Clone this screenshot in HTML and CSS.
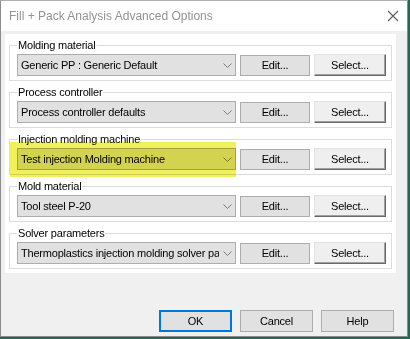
FILE: index.html
```html
<!DOCTYPE html>
<html>
<head>
<meta charset="utf-8">
<link rel="stylesheet" href="styles.css">
</head>
<body>
<div class="window">
  <div class="titlebar">
    <span class="title">Fill + Pack Analysis Advanced Options</span>
    <svg class="close" width="12" height="12" viewBox="0 0 12 12"><path d="M1 1 L11 11 M11 1 L1 11" stroke="#5a5a5a" stroke-width="1.1" fill="none"/></svg>
  </div>
  <div class="client">
    <div class="panel">
      <fieldset class="group">
        <legend>Molding material</legend>
        <div class="row">
          <div class="combo"><span class="combo-text">Generic PP : Generic Default</span><span class="combo-arrow"><svg width="9" height="5" viewBox="0 0 9 5"><path d="M0.5 0.5 L4.5 4.5 L8.5 0.5" stroke="#7a7a7a" fill="none"/></svg></span></div>
          <button class="btn-edit">Edit...</button>
          <button class="btn-select">Select...</button>
        </div>
      </fieldset>
      <fieldset class="group">
        <legend>Process controller</legend>
        <div class="row">
          <div class="combo"><span class="combo-text">Process controller defaults</span><span class="combo-arrow"><svg width="9" height="5" viewBox="0 0 9 5"><path d="M0.5 0.5 L4.5 4.5 L8.5 0.5" stroke="#7a7a7a" fill="none"/></svg></span></div>
          <button class="btn-edit">Edit...</button>
          <button class="btn-select">Select...</button>
        </div>
      </fieldset>
      <fieldset class="group">
        <legend>Injection molding machine</legend>
        <div class="row">
          <div class="combo"><span class="combo-text">Test injection Molding machine</span><span class="combo-arrow"><svg width="9" height="5" viewBox="0 0 9 5"><path d="M0.5 0.5 L4.5 4.5 L8.5 0.5" stroke="#7a7a7a" fill="none"/></svg></span></div>
          <button class="btn-edit">Edit...</button>
          <button class="btn-select">Select...</button>
        </div>
      </fieldset>
      <fieldset class="group">
        <legend>Mold material</legend>
        <div class="row">
          <div class="combo"><span class="combo-text">Tool steel P-20</span><span class="combo-arrow"><svg width="9" height="5" viewBox="0 0 9 5"><path d="M0.5 0.5 L4.5 4.5 L8.5 0.5" stroke="#7a7a7a" fill="none"/></svg></span></div>
          <button class="btn-edit">Edit...</button>
          <button class="btn-select">Select...</button>
        </div>
      </fieldset>
      <fieldset class="group">
        <legend>Solver parameters</legend>
        <div class="row">
          <div class="combo"><span class="combo-text">Thermoplastics injection molding solver parameters</span><span class="combo-arrow"><svg width="9" height="5" viewBox="0 0 9 5"><path d="M0.5 0.5 L4.5 4.5 L8.5 0.5" stroke="#7a7a7a" fill="none"/></svg></span></div>
          <button class="btn-edit">Edit...</button>
          <button class="btn-select">Select...</button>
        </div>
      </fieldset>
    </div>
    <div class="footer">
      <button class="btn btn-ok">OK</button>
      <button class="btn">Cancel</button>
      <button class="btn">Help</button>
    </div>
  </div>
  <div class="highlight"></div>
</div>
</body>
</html>
```

FILE: styles.css
```css
html, body {
  margin: 0;
  padding: 0;
}
body {
  background: #1d6b52;
  width: 410px;
  height: 339px;
  overflow: hidden;
  font-family: "Liberation Sans", Arial, sans-serif;
  font-size: 11px;
  color: #000;
}
.window {
  position: relative;
  width: 408px;
  height: 337px;
  box-sizing: border-box;
  border: 1px solid #8c8c8c;
  border-top-color: #b0b0b0;
  background: #f0f0f0;
  display: flex;
  flex-direction: column;
}
.titlebar {
  height: 30px;
  background: #fff;
  display: flex;
  align-items: center;
  justify-content: space-between;
  padding: 0 8px 0 8px;
  flex: none;
}
.title {
  font-size: 12px;
  color: #939393;
}
.close {
  display: block;
}
.client {
  flex: 1;
  display: flex;
  flex-direction: column;
  padding: 3px 11px 4px 4px;
}
.panel {
  background: #fff;
  padding: 4px;
}
.group {
  margin: 0 0 4px 0;
  border: 1px solid #dcdcdc;
  padding: 2px 4px 4px 7px;
  min-width: 0;
}
.group:last-child {
  margin-bottom: 0;
}
.group legend {
  padding: 0 1px;
  line-height: 14px;
  font-size: 11px;
  letter-spacing: -0.2px;
  color: #000;
}
.row {
  display: flex;
  align-items: center;
  height: 22px;
}
.combo {
  width: 219px;
  height: 22px;
  box-sizing: border-box;
  border: 1px solid #adadad;
  background: #e1e1e1;
  display: flex;
  align-items: center;
  margin-right: 4px;
}
.combo-text {
  flex: 1;
  min-width: 0;
  overflow: hidden;
  white-space: nowrap;
  padding-left: 3px;
  letter-spacing: -0.2px;
}
.combo-arrow {
  width: 16px;
  flex: none;
  display: flex;
  justify-content: center;
  align-items: center;
}
.combo-arrow svg {
  display: block;
}
button {
  font-family: "Liberation Sans", Arial, sans-serif;
  font-size: 11px;
  color: #000;
  padding: 0;
  letter-spacing: -0.2px;
}
.btn-edit {
  width: 70px;
  height: 21px;
  box-sizing: border-box;
  background: #e1e1e1;
  border: 1px solid #adadad;
  margin-right: 4px;
}
.btn-select {
  width: 72px;
  height: 22px;
  box-sizing: border-box;
  background: #efefef;
  border: 1px solid;
  border-color: #e3e3e3 #696969 #696969 #e3e3e3;
  box-shadow: inset -1px -1px 0 #a0a0a0;
}
.footer {
  margin-top: auto;
  display: flex;
  justify-content: flex-end;
  gap: 8px;
  padding-right: 2px;
}
.btn {
  width: 73px;
  height: 22px;
  box-sizing: border-box;
  background: #e1e1e1;
  border: 1px solid #adadad;
}
.btn-ok {
  border: 2px solid #0078d7;
}
.highlight {
  position: absolute;
  left: 9px;
  top: 141px;
  width: 226px;
  height: 35px;
  background: #f0f05a;
  mix-blend-mode: multiply;
  pointer-events: none;
}
```
